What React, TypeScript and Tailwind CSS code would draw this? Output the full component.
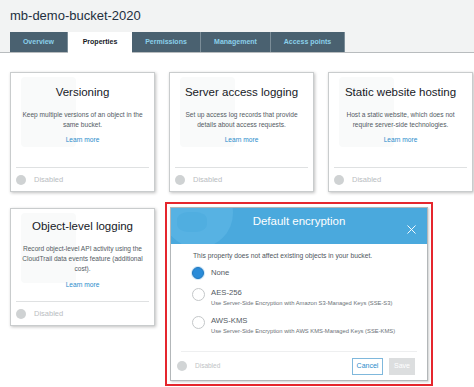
import { X } from "lucide-react";

const tabs = ["Overview", "Properties", "Permissions", "Management", "Access points"];
const tabWidths = ["w-[58px]", "w-[64px]", "w-[69px]", "w-[70px]", "w-[74px]"];

interface CardProps {
  title: string;
  lines: string[];
  className?: string;
  titleTop?: string;
  learnTop?: string;
}

function PropertyCard({ title, lines, className, titleTop, learnTop }: CardProps) {
  return (
    <div
      className={`relative w-[145px] bg-white border border-[#c9cccd] shadow-[1px_1px_3px_rgba(0,0,0,0.25)] flex flex-col ${className ?? ""}`}
    >
      <div className="absolute left-[10px] top-[4px] w-[55px] h-[70px] bg-[#f9fafa] rounded-sm" />
      <div className="relative flex flex-col items-center px-[4px]">
        <div className={`${titleTop ?? "mt-[12px]"} text-[11.5px] text-[#16191f] leading-[14px] whitespace-nowrap`}>
          {title}
        </div>
        <div className="mt-[11px] text-[6.6px] leading-[10px] text-[#545b64] text-center whitespace-nowrap">
          {lines.map((l) => (
            <div key={l}>{l}</div>
          ))}
        </div>
        <div className={`${learnTop ?? "mt-[5px]"} text-[6.6px] leading-[10px] text-[#2a8bcb]`}>Learn more</div>
      </div>
      <div className="flex-1" />
      <div className="mx-[5px] border-t border-[#dfe1e2]" />
      <div className="flex items-center gap-[8px] pl-[5px] h-[23px]">
        <span className="w-[10px] h-[10px] rounded-full bg-[#cfd2d3]" />
        <span className="text-[7.5px] text-[#b9bdbf]">Disabled</span>
      </div>
    </div>
  );
}

function Radio({ checked }: { checked?: boolean }) {
  return checked ? (
    <span className="shrink-0 w-[12px] h-[12px] rounded-full bg-[#2a8bd8] border border-[#1f78c0] shadow-[0_0_0_1px_#cfe6f7]" />
  ) : (
    <span className="shrink-0 w-[13px] h-[13px] rounded-full border border-[#c4c7c9] bg-white" />
  );
}

export default function App() {
  return (
    <div className="w-[474px] h-[387px] bg-white overflow-hidden font-['Liberation_Sans',Arial,sans-serif]">
      <div className="bg-[#f2f3f3] border-b border-[#b8bcbe] h-[53px] flex flex-col">
        <div className="pl-[10px] pt-[8px] text-[13px] leading-[16px] text-[#232f3e]">mb-demo-bucket-2020</div>
        <div className="flex mt-[8px] pl-[10px]">
          {tabs.map((t, i) =>
            i === 1 ? (
              <div
                key={t}
                className={`${tabWidths[i]} h-[21px] bg-white text-[#16191f] text-[7px] font-bold flex items-center justify-center -mb-px`}
              >
                {t}
              </div>
            ) : (
              <div
                key={t}
                className={`${tabWidths[i]} h-[20px] bg-[#4a6170] border-r border-[#7b8d98] text-[#8bd0ea] text-[7px] font-bold flex items-center justify-center`}
              >
                {t}
              </div>
            )
          )}
        </div>
      </div>

      <div className="pl-[10px] pt-[19px] flex flex-col">
        <div className="flex gap-[14px]">
          <PropertyCard
            title="Versioning"
            className="h-[120px]"
            lines={["Keep multiple versions of an object in the", "same bucket."]}
          />
          <PropertyCard
            title="Server access logging"
            className="h-[120px]"
            lines={["Set up access log records that provide", "details about access requests."]}
          />
          <PropertyCard
            title="Static website hosting"
            className="h-[120px]"
            lines={["Host a static website, which does not", "require server-side technologies."]}
          />
        </div>

        <div className="flex items-start gap-[10px] mt-[10px]">
          <PropertyCard
            title="Object-level logging"
            className="h-[118px] mt-[6px]"
            titleTop="mt-[10px]"
            learnTop="mt-[6px]"
            lines={["Record object-level API activity using the", "CloudTrail data events feature (additional", "cost)."]}
          />

          <div className="w-[268px] h-[184px] border-2 border-[#e5262d] p-[3px]">
            <div className="h-full bg-white border border-[#b3b7b9] shadow-[1px_1px_2px_rgba(0,0,0,0.2)] flex flex-col">
              <div className="relative h-[36px] shrink-0 bg-[#4aa9dd] overflow-hidden flex items-center justify-center">
                <div className="absolute -left-[8px] -top-[30px] w-[70px] h-[70px] rounded-full bg-[#57b2e3]" />
                <div className="absolute left-[6px] top-[4px] w-[30px] h-[20px] rounded-[40%] bg-[#50aee0]" />
                <span className="relative text-white text-[11.5px] leading-none -mt-[8px]">Default encryption</span>
                <X className="absolute right-[8px] top-[14px] w-[15px] h-[15px] text-white" strokeWidth={1.5} />
              </div>
              <div className="px-[22px] pt-[7px] flex flex-col">
                <div className="text-[6.75px] leading-[10px] text-[#4f565d] whitespace-nowrap">
                  This property does not affect existing objects in your bucket.
                </div>
                <div className="mt-[6px] flex items-center gap-[7px] -ml-[1px]">
                  <Radio checked />
                  <span className="text-[7.7px] leading-[10px] text-[#545b64]">None</span>
                </div>
                <div className="mt-[9px] flex items-start gap-[6px] -ml-[1px]">
                  <Radio />
                  <div className="flex flex-col">
                    <span className="text-[7.7px] text-[#545b64] leading-[10px]">AES-256</span>
                    <span className="text-[5.8px] text-[#6b7177] leading-[10px] whitespace-nowrap">
                      Use Server-Side Encryption with Amazon S3-Managed Keys (SSE-S3)
                    </span>
                  </div>
                </div>
                <div className="mt-[8px] flex items-start gap-[6px] -ml-[1px]">
                  <Radio />
                  <div className="flex flex-col">
                    <span className="text-[7.7px] text-[#545b64] leading-[10px]">AWS-KMS</span>
                    <span className="text-[5.8px] text-[#6b7177] leading-[10px] whitespace-nowrap">
                      Use Server-Side Encryption with AWS KMS-Managed Keys (SSE-KMS)
                    </span>
                  </div>
                </div>
              </div>
              <div className="flex-1" />
              <div className="mx-[10px] border-t border-[#eeeff0]" />
              <div className="flex items-center px-[6px] h-[28px] shrink-0">
                <span className="w-[10px] h-[10px] rounded-full bg-[#d2d5d6]" />
                <span className="ml-[8px] text-[6.5px] text-[#c0c3c5]">Disabled</span>
                <div className="flex-1" />
                <div className="w-[31px] h-[17px] border border-[#7fb8dc] text-[#2a8bcb] text-[7px] flex items-center justify-center">
                  Cancel
                </div>
                <div className="ml-[6px] w-[26px] h-[17px] bg-[#dcdedf] text-white text-[7px] flex items-center justify-center">
                  Save
                </div>
                <div className="w-[6px]" />
              </div>
            </div>
          </div>
        </div>
      </div>
    </div>
  );
}
